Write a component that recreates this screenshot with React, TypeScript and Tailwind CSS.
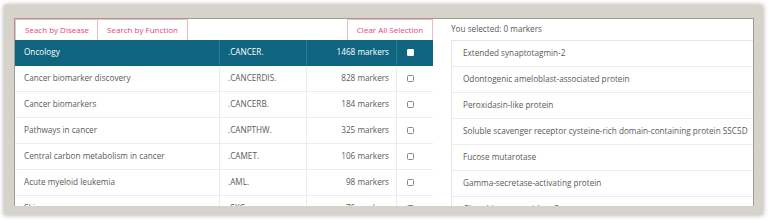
const diseases = [
  { name: "Oncology", code: ".CANCER.", count: 1468 },
  { name: "Cancer biomarker discovery", code: ".CANCERDIS.", count: 828 },
  { name: "Cancer biomarkers", code: ".CANCERB.", count: 184 },
  { name: "Pathways in cancer", code: ".CANPTHW.", count: 325 },
  { name: "Central carbon metabolism in cancer", code: ".CAMET.", count: 106 },
  { name: "Acute myeloid leukemia", code: ".AML.", count: 98 },
  { name: "Skin cancer", code: ".SKC.", count: 76 },
]

const proteins = [
  "Extended synaptotagmin-2",
  "Odontogenic ameloblast-associated protein",
  "Peroxidasin-like protein",
  "Soluble scavenger receptor cysteine-rich domain-containing protein SSC5D",
  "Fucose mutarotase",
  "Gamma-secretase-activating protein",
  "Glutathione peroxidase 3",
]

export default function App() {
  return (
    <div className="w-[768px] h-[220px] bg-white overflow-hidden pt-[5px] pl-[4px] font-['Open_Sans',sans-serif]">
      <div className="w-[759px] h-[210px] bg-[#d6d3cb] shadow-[0_0_5px_rgba(0,0,0,0.35)] pt-[13px] pl-[10px]">
        <div className="w-[740px] h-[188px] bg-white border-t border-l border-r border-[#9f9c95] overflow-hidden flex">
          {/* left: disease table */}
          <div className="w-[418px] shrink-0">
            <div className="flex h-[21px] text-[8px] text-[#e5457e]">
              <div className="w-[83px] border border-[#f2b8cc] border-b-0 flex items-center pl-[9px]">Seach by Disease</div>
              <div className="w-[90px] border border-[#f2b8cc] border-b-0 border-l-0 flex items-center justify-center">Search by Function</div>
              <div className="ml-auto w-[86px] border border-[#f2b8cc] border-b-0 flex items-center justify-center">Clear All Selection</div>
            </div>
            <div className="text-[8.2px] text-[#5a5a5a]">
              {diseases.map((d, i) => {
                const active = i === 0
                return (
                  <div
                    key={d.code}
                    className={`flex h-[26px] border-b ${active ? "bg-[#0f6580] text-white border-[#0f6580]" : "border-[#ececec]"}`}
                  >
                    <div className={`w-[205px] flex items-center pl-[9px] border-r ${active ? "border-[#2a7a93]" : "border-[#ececec]"}`}>{d.name}</div>
                    <div className={`w-[87px] flex items-center pl-[8px] border-r ${active ? "border-[#2a7a93]" : "border-[#ececec]"}`}>{d.code}</div>
                    <div className={`w-[90px] flex items-center justify-end pr-[7px] border-r ${active ? "border-[#2a7a93]" : "border-[#ececec]"}`}>{d.count} markers</div>
                    <div className="flex-1 flex items-center pl-[10px]">
                      {active ? (
                        <span className="w-[7px] h-[7px] bg-white border border-white rounded-[1px]" />
                      ) : (
                        <span className="w-[7px] h-[7px] border border-[#888] rounded-[1.5px]" />
                      )}
                    </div>
                  </div>
                )
              })}
            </div>
          </div>

          {/* right: selected markers */}
          <div className="ml-[18px] flex-1 min-w-[320px]">
            <div className="h-[21px] flex items-center text-[8.2px] text-[#5a5a5a]">You selected: 0 markers</div>
            <div className="border-l border-t border-[#e6e6e6] text-[8.2px] text-[#5a5a5a]">
              {proteins.map((p) => (
                <div key={p} className="h-[26px] flex items-center pl-[11px] border-b border-[#ececec] whitespace-nowrap">
                  {p}
                </div>
              ))}
            </div>
          </div>
        </div>
      </div>
    </div>
  )
}
